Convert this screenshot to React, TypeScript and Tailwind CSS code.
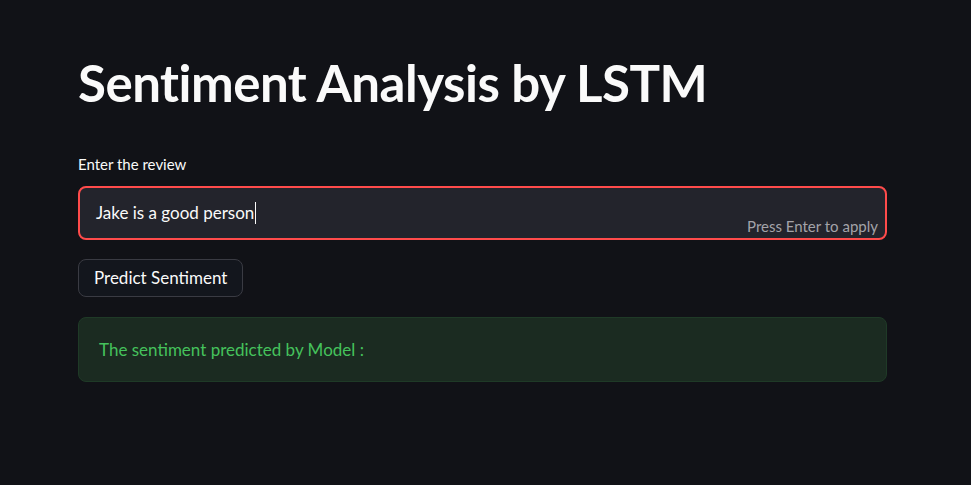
export default function App() {
  return (
    <div
      className="min-h-screen w-full bg-[#111217] text-[#fafafa]"
      style={{ fontFamily: '"Lato", "Noto Sans", sans-serif' }}
    >
      <div className="w-[809px] ml-[78px] pt-[53px] flex flex-col">
        {/* Title */}
        <h1 className="text-[51px] font-bold leading-[60px] tracking-[-0.5px]">Sentiment Analysis by LSTM</h1>

        {/* Text input */}
        <label className="mt-[41px] text-[15px] leading-[20px] text-[#fafafa]">Enter the review</label>
        <div className="mt-[12px] relative h-[54px] rounded-lg border-2 border-[#ff4b4b] bg-[#23242c] flex items-center px-[16px]">
          <span className="text-[17px] text-[#fafafa]">Jake is a good person</span>
          <span className="w-px h-[22px] bg-[#fafafa] ml-px" />
          <span className="absolute right-[7px] bottom-[1px] text-[15px] text-[#a3a3a9]">Press Enter to apply</span>
        </div>

        {/* Button */}
        <button className="mt-[19px] self-start h-[38px] px-[15px] rounded-lg border border-[#3a3b43] bg-[#13161d] text-[17px] text-[#fafafa]">
          Predict Sentiment
        </button>

        {/* Success alert */}
        <div className="mt-[20px] h-[65px] rounded-lg border border-[#1f3a27] bg-[#1b2b21] flex items-center px-[20px]">
          <span className="text-[17px] text-[#45c25c]">The sentiment predicted by Model :</span>
        </div>
      </div>
    </div>
  )
}
